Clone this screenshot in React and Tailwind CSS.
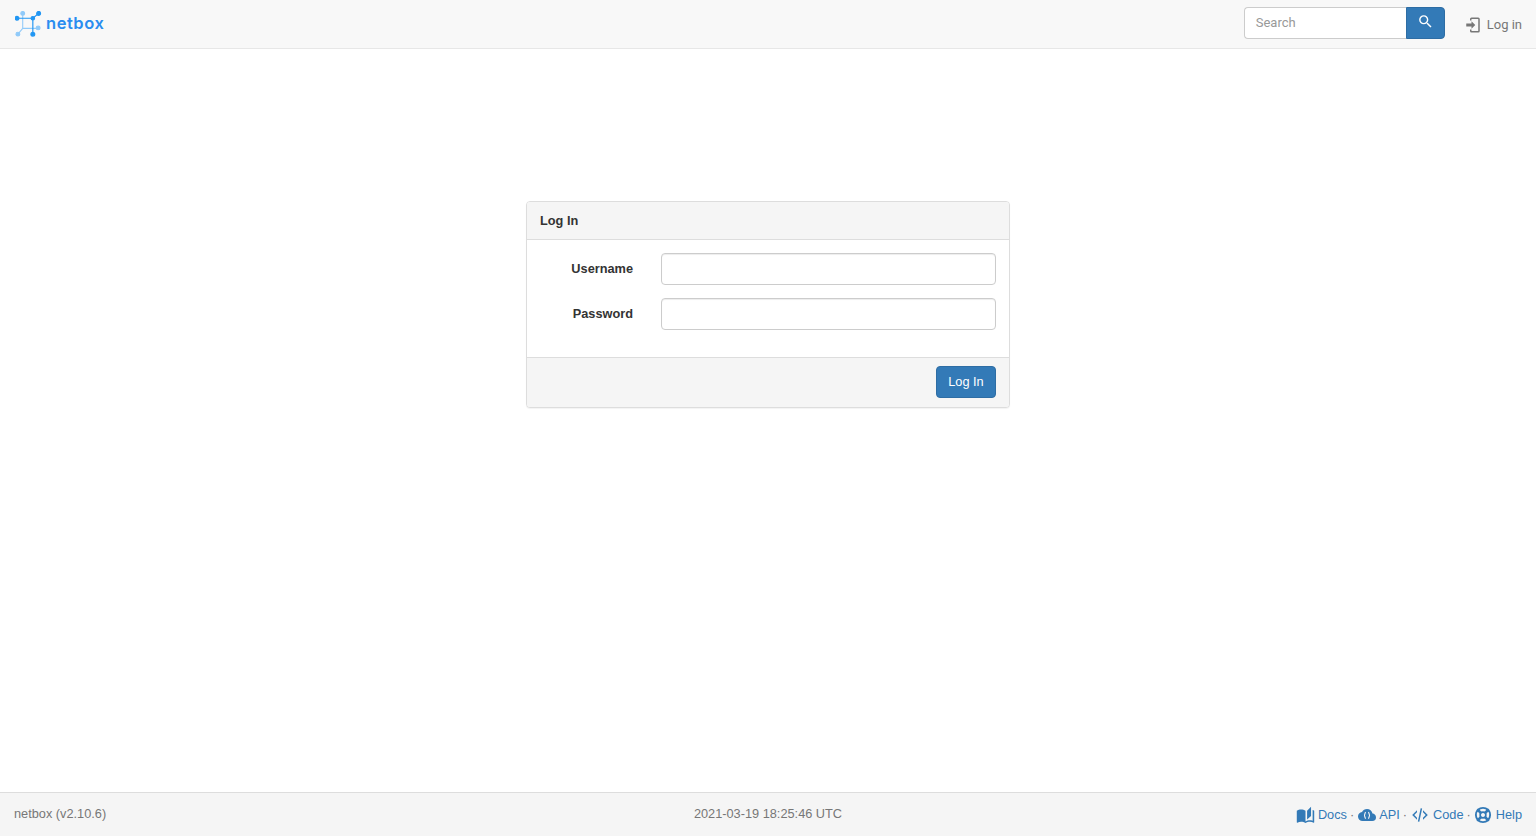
const Mdi = ({ d, className }) => (
  <svg viewBox="0 0 24 24" className={className} fill="currentColor"><path d={d} /></svg>
);

const Logo = () => (
  <svg viewBox="0 0 28 28" className="w-[27px] h-[27px] shrink-0">
    <g stroke="#90caf9" strokeWidth="1.100" fill="#90caf9">
      <path d="M8 2.500V18M8 18H24M8 18L3 24" fill="none" />
      <circle cx="8" cy="2.500" r="2" />
      <circle cx="24" cy="17.500" r="2" />
      <circle cx="3" cy="24" r="2" />
    </g>
    <g stroke="#2196f3" strokeWidth="1.200" fill="#2196f3">
      <path d="M2 7.500H18.500M18.500 7.500V24M18.500 7.500L24.500 2.500" fill="none" />
      <circle cx="2" cy="7.500" r="2" />
      <circle cx="18.500" cy="24" r="2" />
      <circle cx="24.500" cy="2.500" r="2" />
      <circle cx="18.500" cy="7.500" r="1.800" />
    </g>
  </svg>
);

const FooterLink = ({ children, label }) => (
  <span className="inline-flex items-center gap-[3px] text-[#337ab7]">
    {children}
    <span>{label}</span>
  </span>
);

const Sep = () => <span className="text-[#777] mx-[3px]">·</span>;

const mdi = {
  book: "M19 1L14 6V17L19 12.500V1M21 5V18.500C19.900 18.150 18.700 18 17.500 18C15.800 18 13.350 18.650 12 19.500V6C10.550 4.900 8.450 4.500 6.500 4.500C4.550 4.500 2.450 4.900 1 6V20.650C1 20.900 1.250 21.150 1.500 21.150C1.600 21.150 1.650 21.100 1.750 21.100C3.100 20.450 5.050 20 6.500 20C8.450 20 10.550 20.400 12 21.500C13.350 20.650 15.800 20 17.500 20C19.150 20 20.850 20.300 22.250 21.050C22.350 21.100 22.400 21.100 22.500 21.100C22.750 21.100 23 20.850 23 20.600V6C22.400 5.550 21.750 5.250 21 5Z",
  xml: "M12.890,3L14.850,3.400L11.110,21L9.150,20.600L12.890,3M19.590,12L16,8.410V5.580L22.420,12L16,18.410V15.580L19.590,12M1.580,12L8,5.580V8.410L4.410,12L8,15.580V18.410L1.580,12Z",
  search: "M9.500,3A6.500,6.500 0 0,1 16,9.500C16,11.110 15.410,12.590 14.440,13.730L14.710,14H15.500L20.500,19L19,20.500L14,15.500V14.710L13.730,14.440C12.590,15.410 11.110,16 9.500,16A6.500,6.500 0 0,1 3,9.500A6.500,6.500 0 0,1 9.500,3M9.500,5C7,5 5,7 5,9.500C5,12 7,14 9.500,14C12,14 14,12 14,9.500C14,7 12,5 9.500,5Z",
  login: "M10,17V14H3V10H10V7L15,12L10,17M10,2H19A2,2 0 0,1 21,4V20A2,2 0 0,1 19,22H10A2,2 0 0,1 8,20V18H10V20H19V4H10V6H8V4A2,2 0 0,1 10,2Z",
};

export default function App() {
  return (
    <div className="h-[836px] flex flex-col bg-white text-[12.75px] text-[#333] font-['Liberation_Sans',sans-serif] overflow-hidden">
      <header className="h-[49px] shrink-0 bg-[#f8f8f8] border-b border-[#e7e7e7] flex items-center pl-[15px] pr-[14px]">
        <Logo />
        <span className="ml-[4px] mt-[-2px] font-['Inter',sans-serif] font-semibold text-[16.5px] tracking-[0.55px] text-[#2a8df0]">netbox</span>
        <div className="ml-auto flex h-[32px] mt-[-3px]">
          <div className="w-[162px] h-full bg-white border border-[#ccc] border-r-0 rounded-l-[4px] pl-[11px] flex items-center font-['Roboto',sans-serif] text-[13px] text-[#999]">Search</div>
          <button className="w-[39px] h-full bg-[#337ab7] border border-[#2e6da4] rounded-r-[4px] flex items-center justify-center text-white">
            <Mdi d={mdi.search} className="w-[17px] h-[17px] mt-[-2px]" />
          </button>
        </div>
        <span className="ml-[20px] flex items-center gap-[5px] text-[#777] font-['Roboto',sans-serif] text-[13px] pt-[1px]">
          <Mdi d={mdi.login} className="w-[18px] h-[18px] ml-[-1px]" />
          Log in
        </span>
      </header>

      <main className="flex-1 flex justify-center pt-[152px]">
        <div className="w-[484px] h-[207px] bg-white border border-[#ddd] rounded-[4px] shadow-[0_1px_1px_rgba(0,0,0,0.05)] flex flex-col">
          <div className="h-[38px] shrink-0 bg-[#f5f5f5] border-b border-[#ddd] rounded-t-[3px] flex items-center px-[13px] font-bold text-[#333]">Log In</div>
          <div className="flex-1 pt-[13px] pr-[13px]">
            <div className="flex items-center h-[32px] mb-[13px]">
              <label className="w-[106px] text-right font-bold">Username</label>
              <input className="ml-[28px] flex-1 h-full bg-white border border-[#ccc] rounded-[4px] shadow-[inset_0_1px_1px_rgba(0,0,0,0.075)]" />
            </div>
            <div className="flex items-center h-[32px]">
              <label className="w-[106px] text-right font-bold">Password</label>
              <input type="password" className="ml-[28px] flex-1 h-full bg-white border border-[#ccc] rounded-[4px] shadow-[inset_0_1px_1px_rgba(0,0,0,0.075)]" />
            </div>
          </div>
          <div className="h-[50px] shrink-0 bg-[#f5f5f5] border-t border-[#ddd] rounded-b-[3px] flex items-center justify-end pr-[13px] pb-[2px]">
            <button className="w-[60px] h-[32px] bg-[#337ab7] border border-[#2e6da4] rounded-[4px] text-white">Log In</button>
          </div>
        </div>
      </main>

      <footer className="h-[44px] shrink-0 bg-[#f5f5f5] border-t border-[#ddd] grid grid-cols-3 items-center px-[14px] pb-[2px] text-[#777]">
        <span>netbox (v2.10.6)</span>
        <span className="text-center">2021-03-19 18:25:46 UTC</span>
        <div className="flex justify-end items-center pt-[3px]">
          <FooterLink label="Docs"><Mdi d={mdi.book} className="w-[19px] h-[19px]" /></FooterLink>
          <span className="text-[#777] ml-[3px] mr-[4px]">·</span>
          <FooterLink label="API">
            <svg viewBox="0 0 24 24" className="w-[18px] h-[18px]">
              <path fill="currentColor" d="M19.350,10.030C18.670,6.590 15.640,4 12,4C9.110,4 6.600,5.640 5.350,8.030C2.340,8.360 0,10.900 0,14A6,6 0 0,0 6,20H19A5,5 0 0,0 24,15C24,12.360 21.950,10.220 19.350,10.030Z" />
              <path fill="none" stroke="#f5f5f5" strokeWidth="1.500" d="M10.500 8.500C8.500 8.500 9.800 12.500 8 12.500C9.800 12.500 8.500 16.500 10.500 16.500M13.500 8.500C15.500 8.500 14.200 12.500 16 12.500C14.200 12.500 15.500 16.500 13.500 16.500" />
            </svg>
          </FooterLink>
          <span className="text-[#777] ml-[3px] mr-[4px]">·</span>
          <span className="inline-flex items-center gap-[4px] text-[#337ab7]"><Mdi d={mdi.xml} className="w-[18px] h-[18px]" /><span>Code</span></span>
          <Sep />
          <FooterLink label="Help">
            <svg viewBox="0 0 24 24" className="w-[18px] h-[18px] mr-[1px]">
              <circle cx="12" cy="12" r="9.500" fill="none" stroke="currentColor" strokeWidth="2.500" />
              <circle cx="12" cy="12" r="3.800" fill="none" stroke="currentColor" strokeWidth="2.200" />
              <path fill="currentColor" d="M5.500 3L11 8.500L8.500 11L3 5.500ZM18.500 3L21 5.500L15.500 11L13 8.500ZM5.500 21L3 18.500L8.500 13L11 15.500ZM18.500 21L13 15.500L15.500 13L21 18.500Z" />
            </svg>
          </FooterLink>
        </div>
      </footer>
    </div>
  );
}
